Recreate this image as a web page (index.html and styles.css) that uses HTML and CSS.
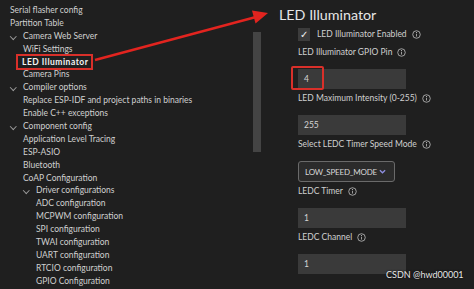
FILE: index.html
```html
<!DOCTYPE html>
<html lang="en">
<head>
    <meta charset="UTF-8">
    <meta name="viewport" content="width=device-width, initial-scale=1.0">
    <title>SDK Configuration Editor</title>
    <link rel="stylesheet" href="styles.css">
</head>
<body>
    <div class="screen">
        <aside class="tree">
            <div class="row lvl0">Serial flasher config</div>
            <div class="row lvl0">Partition Table</div>
            <div class="row lvl1 open"><span class="chev"></span>Camera Web Server</div>
            <div class="row lvl1">WiFi Settings</div>
            <div class="row lvl1 picked"><span class="mark">LED Illuminator</span></div>
            <div class="row lvl1">Camera Pins</div>
            <div class="row lvl1 open"><span class="chev"></span>Compiler options</div>
            <div class="row lvl1">Replace ESP-IDF and project paths in binaries</div>
            <div class="row lvl1">Enable C++ exceptions</div>
            <div class="row lvl1 open"><span class="chev"></span>Component config</div>
            <div class="row lvl1">Application Level Tracing</div>
            <div class="row lvl1">ESP-ASIO</div>
            <div class="row lvl1">Bluetooth</div>
            <div class="row lvl1">CoAP Configuration</div>
            <div class="row lvl2 open"><span class="chev"></span>Driver configurations</div>
            <div class="row lvl2">ADC configuration</div>
            <div class="row lvl2">MCPWM configuration</div>
            <div class="row lvl2">SPI configuration</div>
            <div class="row lvl2">TWAI configuration</div>
            <div class="row lvl2">UART configuration</div>
            <div class="row lvl2">RTCIO configuration</div>
            <div class="row lvl2">GPIO Configuration</div>
        </aside>

        <div class="scrollbar"><div class="thumb"></div></div>

        <main class="settings">
            <h1>LED Illuminator</h1>
            <div class="fields">
                <div class="check-row">
                    <span class="checkbox">&#10003;</span>
                    <span class="label">LED Illuminator Enabled</span>
                    <svg class="info" viewBox="0 0 10 10"><circle cx="5" cy="5" r="4.2"/><line x1="5" y1="4.3" x2="5" y2="7.3"/><circle class="dot" cx="5" cy="2.9" r="0.6"/></svg>
                </div>

                <div class="field">
                    <div class="label">LED Illuminator GPIO Pin <svg class="info" viewBox="0 0 10 10"><circle cx="5" cy="5" r="4.2"/><line x1="5" y1="4.3" x2="5" y2="7.3"/><circle class="dot" cx="5" cy="2.9" r="0.6"/></svg></div>
                    <div class="input-wrap">
                        <div class="input">4</div>
                        <div class="highlight"></div>
                    </div>
                </div>

                <div class="field">
                    <div class="label">LED Maximum Intensity (0-255) <svg class="info" viewBox="0 0 10 10"><circle cx="5" cy="5" r="4.2"/><line x1="5" y1="4.3" x2="5" y2="7.3"/><circle class="dot" cx="5" cy="2.9" r="0.6"/></svg></div>
                    <div class="input">255</div>
                </div>

                <div class="field">
                    <div class="label">Select LEDC Timer Speed Mode <svg class="info" viewBox="0 0 10 10"><circle cx="5" cy="5" r="4.2"/><line x1="5" y1="4.3" x2="5" y2="7.3"/><circle class="dot" cx="5" cy="2.9" r="0.6"/></svg></div>
                    <div class="select">
                        <span class="select-text">LOW_SPEED_MODE</span>
                        <svg class="drop" viewBox="0 0 8 5"><polyline points="1,1 4,4 7,1"/></svg>
                    </div>
                </div>

                <div class="field">
                    <div class="label">LEDC Timer <svg class="info" viewBox="0 0 10 10"><circle cx="5" cy="5" r="4.2"/><line x1="5" y1="4.3" x2="5" y2="7.3"/><circle class="dot" cx="5" cy="2.9" r="0.6"/></svg></div>
                    <div class="input">1</div>
                </div>

                <div class="field">
                    <div class="label">LEDC Channel <svg class="info" viewBox="0 0 10 10"><circle cx="5" cy="5" r="4.2"/><line x1="5" y1="4.3" x2="5" y2="7.3"/><circle class="dot" cx="5" cy="2.9" r="0.6"/></svg></div>
                    <div class="input">1</div>
                </div>
            </div>
        </main>

        <!-- annotation arrow drawn over the screenshot -->
        <svg class="arrow" viewBox="0 0 474 289">
            <line x1="95" y1="60" x2="256" y2="17" />
            <polygon points="268,13 252,10.5 255.5,23.5" />
        </svg>

        <span class="watermark">CSDN @hwd00001</span>
    </div>
</body>
</html>
```

FILE: styles.css
```css
body {
    margin: 0;
    background: #1f1f1f;
    font-family: 'Segoe UI', Lato, 'Noto Sans', sans-serif;
    color: #d0d0d0;
}

.screen {
    position: relative;
    display: flex;
    width: 474px;
    height: 289px;
    overflow: hidden;
    background: #1f1f1f;
}

/* left tree */
.tree {
    width: 253px;
    flex: none;
    padding-top: 4px;
    font-size: 8.5px;
    overflow: hidden;
    white-space: nowrap;
}

.row {
    height: 12.9px;
    line-height: 12.9px;
    position: relative;
}

.lvl0 {
    padding-left: 10px;
}

.lvl1 {
    padding-left: 23px;
}

.lvl2 {
    padding-left: 36px;
}

.chev {
    position: absolute;
    top: 4px;
    width: 3.5px;
    height: 3.5px;
    border-right: 1px solid #9a9a9a;
    border-bottom: 1px solid #9a9a9a;
    transform: rotate(45deg);
}

.lvl1 .chev {
    left: 11px;
}

.lvl2 .chev {
    left: 24px;
}

.picked {
    font-weight: bold;
    color: #f4f4f4;
}

.mark {
    letter-spacing: 0.5px;
    outline: 2px solid #d9302a;
    outline-offset: 1px;
    padding: 0 2px 0 3px;
    margin-left: -4px;
}

/* scrollbar */
.scrollbar {
    width: 8px;
    flex: none;
    padding-top: 32px;
}

.thumb {
    height: 120px;
    background: #444444;
}

/* right settings */
.settings {
    flex: 1;
    padding-left: 18px;
}

h1 {
    margin: 4px 0 0;
    font-size: 14.3px;
    font-weight: normal;
    color: #e6e6e6;
    line-height: 22px;
}

.fields {
    padding-left: 19px;
    font-size: 8.5px;
}

.check-row {
    display: flex;
    align-items: center;
    gap: 7px;
    height: 14px;
    margin-top: 1px;
}

.checkbox {
    width: 12px;
    height: 13px;
    background: #3c3c3c;
    color: #f2f2f2;
    font-size: 10px;
    line-height: 13px;
    text-align: center;
}

.check-row .info {
    margin-left: -2px;
}

.field {
    display: flex;
    flex-direction: column;
    gap: 10px;
    margin-top: 5px;
}

.field + .field {
    margin-top: 3px;
}

.label {
    height: 13px;
    line-height: 13px;
    display: flex;
    align-items: center;
    gap: 5px;
}

.info {
    width: 9px;
    height: 9px;
    flex: none;
    fill: none;
    stroke: #cfcfcf;
    stroke-width: 0.8;
}

.info .dot {
    fill: #cfcfcf;
    stroke: none;
}

.input-wrap {
    position: relative;
}

.input {
    width: 108px;
    height: 20px;
    line-height: 20px;
    padding-left: 6px;
    box-sizing: border-box;
    background: #3a3a3a;
    color: #d4d4d4;
}

.highlight {
    position: absolute;
    left: -7px;
    top: -3px;
    width: 29px;
    height: 20px;
    border: 2px solid #d9302a;
    border-radius: 2px;
}

.select {
    display: flex;
    align-items: center;
    justify-content: space-between;
    width: 97px;
    height: 21px;
    padding: 0 8px 0 6px;
    box-sizing: border-box;
    background: #2b2b2b;
    border: 1px solid #6a6a6a;
    border-radius: 3px;
    color: #d8d8d8;
    white-space: nowrap;
}

.select-text {
    font-size: 8px;
    letter-spacing: -0.2px;
}

.drop {
    width: 7px;
    height: 5px;
    flex: none;
    fill: none;
    stroke: #8e8ee0;
    stroke-width: 1.5;
}

/* overlays */
.arrow {
    position: absolute;
    left: 0;
    top: 0;
    width: 474px;
    height: 289px;
    pointer-events: none;
}

.arrow line {
    stroke: #e2241f;
    stroke-width: 2.4;
}

.arrow polygon {
    fill: #e2241f;
}

.watermark {
    position: absolute;
    left: 386px;
    top: 269px;
    font-size: 9px;
    color: #e8e8e8;
    text-shadow: 0 0 2px #000;
}
```
